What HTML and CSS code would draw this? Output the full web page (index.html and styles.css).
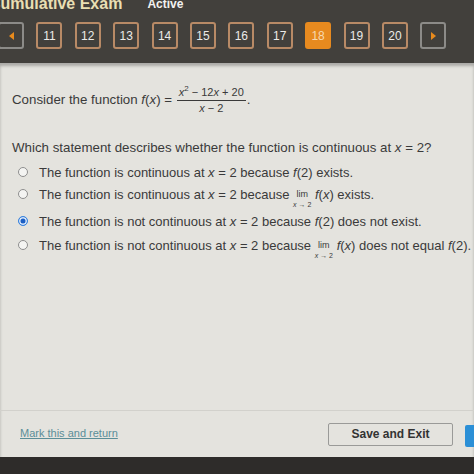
FILE: index.html
```html
<!DOCTYPE html>
<html>
<head>
    <link rel="stylesheet" href="styles.css">
</head>
<body>
    <div class="top-bar">
        <div class="title-row">
            <span class="exam-title">Cumulative Exam</span>
            <span class="exam-status">Active</span>
        </div>
        <div class="nav-row">
            <div class="nav-btn arrow"><span class="tri-left"></span></div>
            <div class="nav-btn">11</div>
            <div class="nav-btn">12</div>
            <div class="nav-btn">13</div>
            <div class="nav-btn">14</div>
            <div class="nav-btn">15</div>
            <div class="nav-btn">16</div>
            <div class="nav-btn">17</div>
            <div class="nav-btn current">18</div>
            <div class="nav-btn">19</div>
            <div class="nav-btn">20</div>
            <div class="nav-btn arrow"><span class="tri-right"></span></div>
        </div>
    </div>

    <div class="panel">
        <div class="question">
            <div class="prompt">
                Consider the function <i>f</i>(<i>x</i>) = <span class="frac"><span class="num"><i>x</i><sup>2</sup> &minus; 12<i>x</i> + 20</span><span class="den"><i>x</i> &minus; 2</span></span>.
            </div>
            <div class="ask">Which statement describes whether the function is continuous at <i>x</i> = 2?</div>
            <div class="options">
                <div class="option">
                    <span class="radio"></span>
                    <span>The function is continuous at <i>x</i> = 2 because <i>f</i>(2) exists.</span>
                </div>
                <div class="option">
                    <span class="radio"></span>
                    <span>The function is continuous at <i>x</i> = 2 because <span class="lim"><span>lim</span><span class="sub"><i>x</i> &rarr; 2</span></span> <i>f</i>(<i>x</i>) exists.</span>
                </div>
                <div class="option">
                    <span class="radio checked"></span>
                    <span>The function is not continuous at <i>x</i> = 2 because <i>f</i>(2) does not exist.</span>
                </div>
                <div class="option">
                    <span class="radio"></span>
                    <span>The function is not continuous at <i>x</i> = 2 because <span class="lim"><span>lim</span><span class="sub"><i>x</i> &rarr; 2</span></span> <i>f</i>(<i>x</i>) does not equal <i>f</i>(2).</span>
                </div>
            </div>
        </div>
        <div class="footer">
            <a class="mark-link">Mark this and return</a>
            <div class="footer-buttons">
                <div class="save-btn">Save and Exit</div>
                <div class="next-btn"></div>
            </div>
        </div>
    </div>
    <div class="bottom-bar"></div>
</body>
</html>
```

FILE: styles.css
```css
body {
    margin: 0;
    width: 474px;
    height: 474px;
    overflow: hidden;
    background-color: #2e2c2a;
    font-family: 'Liberation Sans', Arial, sans-serif;
}

.top-bar {
    height: 63px;
    background-color: #42403c;
    overflow: hidden;
}

.title-row {
    display: flex;
    align-items: center;
    height: 14px;
    margin-top: -3px;
    margin-left: -11px;
    gap: 25px;
}

.exam-title {
    color: #e9dfb3;
    font-size: 16px;
    font-weight: bold;
}

.exam-status {
    color: #f2f2f0;
    font-size: 12px;
    font-weight: bold;
}

.nav-row {
    display: flex;
    gap: 12.4px;
    margin-top: 11px;
    margin-left: -2px;
}

.nav-btn {
    width: 22px;
    height: 23px;
    border: 2px solid #b88a66;
    border-radius: 3px;
    display: flex;
    justify-content: center;
    align-items: center;
    color: #ecebe8;
    font-size: 12px;
}

.nav-btn.current {
    background-color: #e78a1f;
    border-color: #e78a1f;
    color: #f7d9b0;
}

.nav-btn.arrow {
    border-color: #8c8b88;
}

.tri-left {
    width: 0;
    height: 0;
    border-top: 4px solid transparent;
    border-bottom: 4px solid transparent;
    border-right: 5px solid #e88a1c;
}

.tri-right {
    width: 0;
    height: 0;
    border-top: 4px solid transparent;
    border-bottom: 4px solid transparent;
    border-left: 5px solid #e88a1c;
}

.panel {
    height: 394px;
    background-color: #e4e3de;
    display: flex;
    flex-direction: column;
    box-shadow: inset 0 3px 3px rgba(0, 0, 0, 0.25);
}

.question {
    padding: 23px 0 0 12px;
    color: #3a3a3a;
    font-size: 13.3px;
    white-space: nowrap;
}

.frac {
    display: inline-flex;
    flex-direction: column;
    align-items: center;
    vertical-align: middle;
    font-size: 11px;
    line-height: 13px;
    margin: 0 1px 0 1px;
}

.frac .num {
    border-bottom: 1px solid #3a3a3a;
    padding: 0 2px 1px;
}

.frac .num sup {
    font-size: 8px;
    line-height: 0;
}

.frac .den {
    padding-top: 1px;
}

.ask {
    margin-top: 25px;
}

.options {
    margin-top: 10px;
    margin-left: 6px;
    display: flex;
    flex-direction: column;
    font-size: 13px;
}

.option {
    display: flex;
    align-items: flex-start;
    gap: 11px;
    line-height: 15px;
    margin-bottom: 7px;
}

.option:nth-child(2) {
    margin-bottom: 4px;
}

.option:nth-child(3) {
    margin-bottom: 9px;
}

.radio {
    width: 8px;
    height: 8px;
    margin-top: 2px;
    border: 1.5px solid #8e8e8e;
    border-radius: 50%;
    background-color: #f4f4f2;
    flex-shrink: 0;
}

.radio.checked {
    border: 1.5px solid #3a86e0;
    background-color: #1b5fc4;
    box-shadow: inset 0 0 0 1.5px #dce9fb;
}

.lim {
    display: inline-flex;
    flex-direction: column;
    align-items: center;
    vertical-align: top;
    font-size: 9px;
    line-height: 11px;
    margin: 2px 0 0;
}

.lim .sub {
    font-size: 7px;
    line-height: 10px;
}

.footer {
    border-top: 1px solid #d2d1cc;
    margin-top: auto;
    height: 46px;
    display: flex;
    justify-content: space-between;
    align-items: center;
    padding-left: 20px;
}

.mark-link {
    color: #5b8e98;
    font-size: 11px;
    text-decoration: underline;
    margin-top: -3px;
}

.footer-buttons {
    display: flex;
    align-items: center;
    gap: 12px;
    margin-right: -11px;
}

.save-btn {
    width: 123px;
    height: 21px;
    border: 1px solid #9a9a98;
    border-radius: 2px;
    display: flex;
    justify-content: center;
    align-items: center;
    color: #333;
    font-size: 12px;
    font-weight: bold;
}

.next-btn {
    width: 20px;
    height: 22px;
    background-color: #2b8fd6;
    border-radius: 2px;
    margin-top: 4px;
}

.bottom-bar {
    height: 17px;
    background-color: #2e2c2a;
}
```
